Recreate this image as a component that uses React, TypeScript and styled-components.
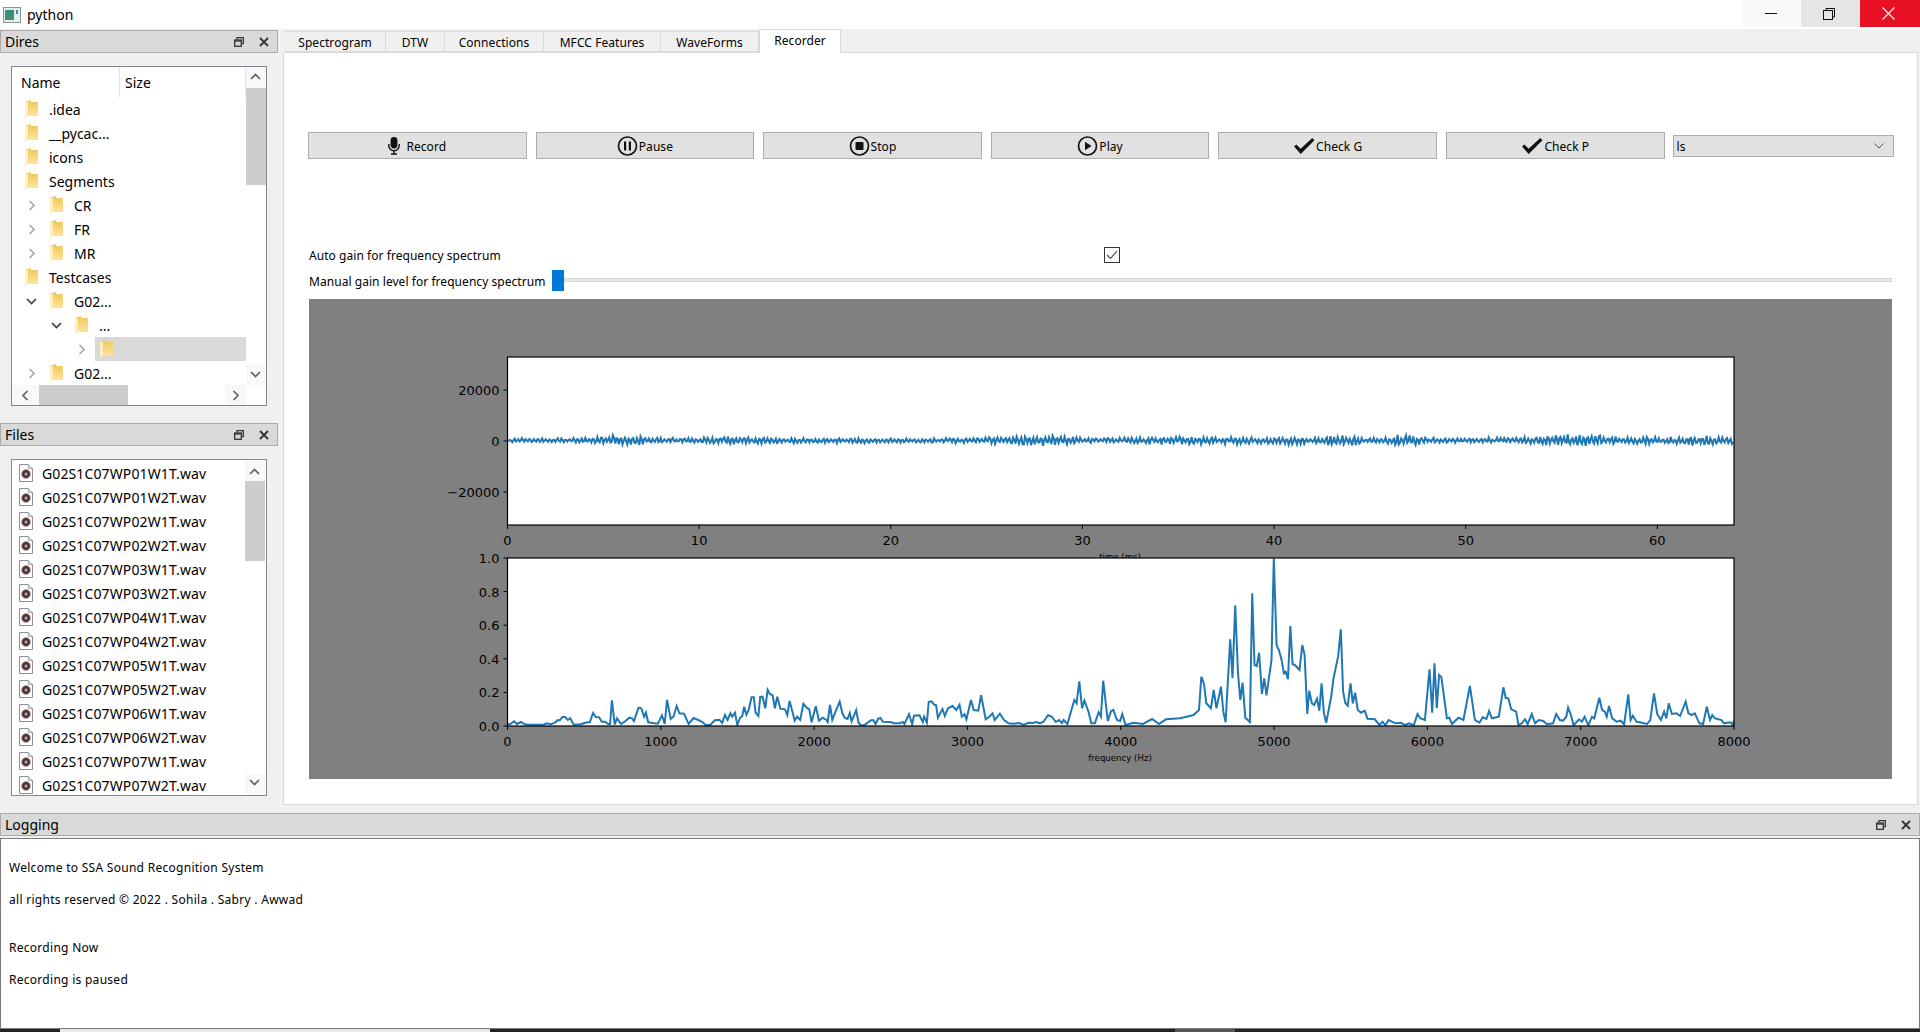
import React from 'react';
import styled, { createGlobalStyle } from 'styled-components';

const GlobalStyle = createGlobalStyle`
  html, body { margin: 0; padding: 0; background: #f0f0f0; }
  body { font-family: "Noto Sans", "Open Sans", sans-serif; color: #000; }
  * { box-sizing: border-box; }
`;

const Window = styled.div`
  width: 1920px;
  height: 1032px;
  overflow: hidden;
  display: flex;
  flex-direction: column;
  background: #f0f0f0;
`;

/* window chrome */
const TitleBar = styled.div`
  height: 29px;
  background: #fff;
  display: flex;
  align-items: flex-start;
`;
const AppIconBox = styled.div`
  width: 27px;
  height: 29px;
  padding: 6px 0 0 3px;
`;
const AppTitle = styled.div`
  flex: 1;
  font-size: 14px;
  line-height: 30px;
`;
const WinButton = styled.div<{ $bg: string; $w: number; $inset: number }>`
  width: ${(p) => p.$w}px;
  height: 27px;
  padding-right: ${(p) => p.$inset}px;
  background: ${(p) => p.$bg};
  display: flex;
  align-items: center;
  justify-content: center;
`;

/* main area */
const MainRow = styled.div`
  height: 784px;
  display: flex;
`;
const LeftColumn = styled.div`
  width: 278px;
  margin: 1px 5px 0 0;
  display: flex;
  flex-direction: column;
`;
const DockTitle = styled.div`
  height: 23px;
  flex: none;
  background: #d9d9d9;
  border: 1px solid #ababab;
  padding: 0 4px;
  display: flex;
  align-items: center;
  font-size: 14px;
`;
const DockName = styled.span`
  flex: 1;
`;
const DockButtons = styled.span`
  display: flex;
  gap: 15px;
  align-items: center;
  margin-right: 4px;
`;

const TreeBox = styled.div`
  width: 256px;
  height: 340px;
  margin: 13px 0 17px 11px;
  border: 1px solid #828790;
  background: #fff;
  display: grid;
  grid-template-columns: 234px 20px;
  grid-template-rows: 318px 20px;
`;
const TreePane = styled.div`
  overflow: hidden;
`;
const HeaderRow = styled.div`
  height: 30px;
  display: flex;
  font-size: 14px;
  line-height: 32px;
`;
const HeaderCell = styled.div<{ $w: number; $pad: number }>`
  width: ${(p) => p.$w}px;
  padding-left: ${(p) => p.$pad}px;
  border-right: 1px solid #e5e5e5;
  height: 30px;
`;
const TreeRow = styled.div<{ $depth: number }>`
  height: 24px;
  padding-left: ${(p) => 13 + p.$depth * 25}px;
  display: flex;
  align-items: center;
  font-size: 14px;
  white-space: nowrap;
`;
const TreeArrow = styled.span`
  width: 25px;
  margin-left: -25px;
  padding-left: 1px;
  display: flex;
  align-items: center;
`;
const FolderSlot = styled.span<{ $selected?: boolean }>`
  display: flex;
  align-items: center;
  height: 24px;
  width: ${(p) => (p.$selected ? '151px' : '24px')};
  margin-left: ${(p) => (p.$selected ? '-5px' : '0')};
  padding-left: ${(p) => (p.$selected ? '5px' : '0')};
  background: ${(p) => (p.$selected ? '#d9d9d9' : 'transparent')};
`;

const FileBox = styled.div`
  width: 256px;
  height: 337px;
  margin: 13px 0 0 11px;
  border: 1px solid #828790;
  background: #fff;
  display: flex;
`;
const FileList = styled.div`
  width: 233px;
  overflow: hidden;
  padding-top: 1px;
`;
const FileRow = styled.div`
  height: 24px;
  display: flex;
  align-items: center;
  padding-left: 7px;
  gap: 9px;
  font-size: 14px;
  letter-spacing: 0.12px;
  white-space: nowrap;
`;

const VScroll = styled.div<{ $h: number }>`
  width: 20px;
  height: ${(p) => p.$h}px;
  background: #fff;
  display: flex;
  flex-direction: column;
  align-items: stretch;
`;
const VArrow = styled.div<{ $top?: number; $bottom?: number }>`
  height: 21px;
  flex: none;
  padding: ${(p) => p.$top || 0}px 1px ${(p) => p.$bottom || 0}px 0;
  background: #f8f8f8;
  display: flex;
  align-items: center;
  justify-content: center;
`;
const VThumb = styled.div<{ $h: number }>`
  height: ${(p) => p.$h}px;
  flex: none;
  background: #cdcdcd;
`;
const ScrollGap = styled.div`
  flex: 1;
`;
const HScroll = styled.div`
  height: 20px;
  grid-column: 1;
  display: flex;
  background: #fff;
`;
const HArrow = styled.div<{ $w: number }>`
  width: ${(p) => p.$w}px;
  flex: none;
  background: #f8f8f8;
  display: flex;
  align-items: center;
  justify-content: center;
`;
const HThumb = styled.div`
  width: 89px;
  background: #cdcdcd;
`;

/* tabs */
const RightColumn = styled.div`
  width: 1635px;
  display: flex;
  flex-direction: column;
`;
const TabStrip = styled.div`
  height: 23px;
  flex: none;
  padding-left: 2px;
  display: flex;
  align-items: flex-end;
`;
const Tab = styled.div<{ $w: number; $active?: boolean }>`
  width: ${(p) => p.$w}px;
  height: ${(p) => (p.$active ? 24 : 21)}px;
  margin-bottom: ${(p) => (p.$active ? -1 : 0)}px;
  position: relative;
  z-index: ${(p) => (p.$active ? 1 : 0)};
  background: ${(p) => (p.$active ? '#fff' : '#f0f0f0')};
  border: 1px solid #d9d9d9;
  border-bottom: ${(p) => (p.$active ? 'none' : '1px solid #d9d9d9')};
  border-left: ${(p) => (p.$active ? '1px solid #d9d9d9' : 'none')};
  font-size: 12px;
  letter-spacing: 0.06px;
  text-align: center;
  line-height: 22.5px;
`;
const TabPane = styled.div`
  height: 753px;
  background: #fff;
  border: 1px solid #d9d9d9;
  padding: 79px 0 0 24px;
  letter-spacing: 0.05px;
`;
const ButtonRow = styled.div`
  display: flex;
  align-items: center;
  gap: 9px;
`;
const ToolButton = styled.div`
  width: 218.6px;
  height: 27px;
  padding-top: 1px;
  background: #e1e1e1;
  border: 1px solid #adadad;
  display: flex;
  align-items: center;
  justify-content: center;
  font-size: 12px;
`;
const ButtonIcon = styled.span<{ $gap: number }>`
  display: flex;
  margin: -1px ${(p) => p.$gap}px 0 0;
`;
const Combo = styled.div`
  width: 221px;
  height: 22px;
  margin-left: -1px;
  background: #e1e1e1;
  border: 1px solid #adadad;
  padding: 1px 9px 0 3px;
  display: flex;
  align-items: center;
  justify-content: space-between;
  font-size: 12px;
`;
const GainRow = styled.div`
  margin: 86px 0 0 1px;
  height: 20px;
  display: grid;
  grid-template-columns: 795px 16px;
  align-items: center;
  font-size: 12px;
`;
const CheckBox = styled.div`
  width: 16px;
  height: 16px;
  border: 1px solid #333;
  background: #fff;
  display: flex;
  align-items: center;
  justify-content: center;
`;
const SliderRow = styled.div`
  margin: 5px 0 0 1px;
  height: 21px;
  width: 1583px;
  display: flex;
  align-items: center;
  font-size: 12px;
`;
const SliderLabel = styled.span`
  width: 243px;
  flex: none;
  padding-top: 2px;
`;
const SliderHandle = styled.div`
  width: 12px;
  height: 21px;
  flex: none;
  background: #0078d7;
`;
const SliderTrack = styled.div`
  flex: 1;
  height: 4px;
  margin-top: -1px;
  background: #e7eaea;
  border: 1px solid #d6d6d6;
`;
const ChartCanvas = styled.div`
  width: 1583px;
  height: 480px;
  margin: 8px 0 0 1px;
  background: #808080;
`;
const ChartSvg = styled.svg`
  display: block;
  font-family: "DejaVu Sans", sans-serif;
  letter-spacing: 0;
`;

/* logging dock */
const LogBox = styled.div`
  height: 191px;
  margin-top: 2px;
  background: #fff;
  border: 1px solid #7a7a7a;
  padding: 13px 0 0 8px;
  font-size: 12px;
  letter-spacing: 0.28px;
`;
const LogLine = styled.div<{ $gap?: number }>`
  line-height: 32px;
  margin-top: ${(p) => p.$gap || 0}px;
`;
const BottomStrip = styled.div`
  height: 3px;
  display: flex;
`;
const StripPart = styled.div<{ $w: number; $bg: string }>`
  width: ${(p) => p.$w}px;
  background: ${(p) => p.$bg};
`;

/* icons */
const AppIcon = () => (
  <svg width="18" height="16" viewBox="0 0 18 16">
    <defs>
      <linearGradient id="appg" x1="0" y1="0" x2="0" y2="1">
        <stop offset="0" stopColor="#2f8f8a" />
        <stop offset="1" stopColor="#4f8f5a" />
      </linearGradient>
    </defs>
    <rect x="0.5" y="0.5" width="17" height="15" fill="#e8ecef" stroke="#8b9298" />
    <rect x="2" y="3" width="9" height="10" fill="url(#appg)" />
    <rect x="13" y="3" width="2" height="4" fill="#3f8fb0" />
  </svg>
);
const FloatIcon = () => (
  <svg width="10" height="10" viewBox="0 0 10 10" fill="none" stroke="#333" strokeWidth="1.3">
    <path d="M3 2.5V.7h6.3v6H7.5" />
    <rect x=".7" y="3" width="6.6" height="6.3" />
    <path d="M.7 4h6.6" />
  </svg>
);
const CloseIcon = () => (
  <svg width="10" height="10" viewBox="0 0 10 10" stroke="#333" strokeWidth="1.8">
    <path d="M1 1l8 8M9 1L1 9" />
  </svg>
);
const DockControls = () => (
  <DockButtons>
    <FloatIcon />
    <CloseIcon />
  </DockButtons>
);
const Chevron = ({ dir, color = '#606060' }: { dir: 'up' | 'down' | 'left' | 'right'; color?: string }) => {
  const d = {
    up: 'M1 7l4.5-4.5L10 7',
    down: 'M1 3l4.5 4.5L10 3',
    left: 'M7.5 1L3 5.5 7.5 10',
    right: 'M3.5 1L8 5.5 3.5 10',
  }[dir];
  return (
    <svg width="11" height="11" viewBox="0 0 11 11" fill="none" stroke={color} strokeWidth="1.7">
      <path d={d} />
    </svg>
  );
};
const Folder = () => (
  <svg width="13" height="18" viewBox="0 0 13 18">
    <defs>
      <linearGradient id="fold" x1="0" y1="0" x2="0" y2="1">
        <stop offset="0" stopColor="#eec65c" />
        <stop offset="1" stopColor="#ffe7a3" />
      </linearGradient>
    </defs>
    <path d="M0 1.5L6 0v2h7v14H3l-3 2z" fill="url(#fold)" />
    <path d="M0 1.5L3 2v14l-3 2z" fill="#ffeebb" />
  </svg>
);
const WavIcon = () => (
  <svg width="14" height="18" viewBox="0 0 14 18">
    <path d="M.5.5h9l4 4v13H.5z" fill="#fdfdfd" stroke="#8e8e96" />
    <path d="M9.5.5v4h4" fill="#e8e8ee" stroke="#a8a8b0" />
    <circle cx="7" cy="10" r="4.2" fill="#4a3438" />
    <circle cx="7" cy="10" r="4.4" fill="none" stroke="#a67a86" strokeWidth=".7" />
    <circle cx="7" cy="10" r="1.5" fill="#c9a99a" />
  </svg>
);
const MicIcon = () => (
  <svg width="12" height="18" viewBox="0 0 12 18">
    <rect x="2.6" y="0" width="6.8" height="11.5" rx="3.4" fill="#111" />
    <path d="M.8 7v1.6a5.2 5.2 0 0 0 10.4 0V7M6 14v2.6M3 17h6" fill="none" stroke="#111" strokeWidth="1.4" />
  </svg>
);
const RingIcon = ({ children }: { children: React.ReactNode }) => (
  <svg width="21" height="20" viewBox="0 0 21 20">
    <circle cx="10.5" cy="10" r="9" fill="none" stroke="#111" strokeWidth="1.7" />
    {children}
  </svg>
);
const CheckIcon = () => (
  <svg width="22" height="16" viewBox="0 0 20 15" preserveAspectRatio="none">
    <path d="M1 8l2-2 4 4L17.5 0 19.5 2 7 15z" fill="#111" />
  </svg>
);

/* spectrum trace, read off the plot in two runs */
const spectrumA = [
  190,553,197,552,205,544,211,552,220,546,228,553,240,554,270,554,275,550,285,553,295,547,300,540,305,541,310,531,316,531,322,540,327,535,335,554,
  350,553,360,548,370,546,377,519,383,531,390,532,396,545,403,545,410,552,414,552,418,481,424,553,429,535,438,552,447,544,456,533,462,535,466,543,
  476,503,482,505,488,530,492,518,497,547,510,550,518,551,527,526,533,552,538,480,546,537,552,530,559,498,565,520,575,521,585,552,596,534,606,540,
  615,546,622,555,632,555,642,541,652,539,658,549,664,525,670,540,676,520,680,530,686,518,691,555,697,534,702,528,706,500,711,524,716,510,722,472,
  727,472,731,518,737,528,741,471,746,470,752,505,757,449,762,462,768,466,773,505,778,470,785,506,795,508,800,525,805,483,812,520,816,542,821,530,
  828,540,835,491,842,503,848,508,853,547,862,499,869,542,877,533,885,540,888,546,893,495,898,540,905,515,914,485,920,520,925,533,931,537,936,519,
  940,544,950,510,955,548,962,558,970,553,982,541,988,541,992,552,998,536,1003,534,1008,545,1025,546,1032,550,1045,550,1052,546,1055,552,1065,523,
  1072,553,1076,527,1088,526,1095,546,1098,530,1104,548,1108,486,1114,484,1120,494,1124,495,1128,533,1138,507,1143,528,1150,505,1160,498,1168,510,
  1175,494,1180,530,1186,523,1190,538,1200,480,1206,510,1216,512,1222,466,1232,538,1240,530,1247,520,1252,540,1263,521,1272,540,1282,550,1292,551,
  1305,549,1315,555,1325,548,1335,549,1342,546,1350,550,1358,545,1368,525,1376,530,1385,546,1392,540,1398,549,1402,540,1410,552,1425,480,1430,490,
  1436,424,1442,505,1447,482,1456,515,1462,550,1470,550,1478,517,1483,530,1488,422,1498,543,1505,514,1510,510,1518,540,1525,543,
];
const spectrumB = [
  5,522,12,555,30,548,50,552,70,537,85,552,100,538,130,535,145,530,160,525,172,510,177,410,183,432,188,490,198,505,204,450,210,505,220,440,225,515,
  230,547,240,298,245,415,251,196,257,400,262,480,267,428,273,533,283,546,288,160,293,375,298,378,303,338,309,462,314,415,319,466,330,360,335,55,
  341,316,346,330,352,360,357,400,361,395,366,418,371,258,376,373,381,375,391,390,397,315,402,345,408,522,412,452,418,490,423,495,429,476,434,512,
  439,430,444,520,449,548,460,470,465,415,475,350,481,268,486,455,491,490,496,497,502,430,507,490,512,458,518,510,525,518,533,512,539,536,555,538,
  565,555,572,545,578,556,585,540,600,550,612,548,620,555,630,550,640,556,648,522,654,535,664,540,674,388,680,518,685,370,690,505,695,405,700,412,
  712,535,717,533,723,552,737,533,748,540,762,438,773,540,783,548,790,532,798,537,804,513,810,535,825,530,835,442,840,474,846,475,852,508,863,515,
  868,556,875,550,882,538,888,552,897,522,904,550,912,540,922,543,930,553,943,550,950,522,958,540,965,542,972,530,976,503,982,525,988,556,1000,538,
  1006,545,1012,530,1020,556,1028,530,1033,535,1044,473,1050,510,1056,515,1060,530,1065,498,1072,535,1082,545,1090,542,1098,553,1107,463,1112,540,
  1117,527,1125,545,1132,547,1148,552,1155,540,1163,460,1170,522,1178,540,1185,515,1190,535,1195,490,1202,522,1212,520,1220,528,1232,485,1238,520,
  1245,525,1252,520,1262,550,1270,552,1278,500,1285,540,1290,525,1296,535,1310,540,1315,550,1330,547,1335,555,1338,540,
];

function tracePoints(run: number[], originX: number) {
  const out: string[] = [];
  for (let i = 0; i < run.length; i += 2) {
    out.push(`${(originX + run[i] / 2.178).toFixed(1)},${(540 + run[i + 1] / 3).toFixed(1)}`);
  }
  return out;
}
const spectrumPoints = [...tracePoints(spectrumA, 420), ...tracePoints(spectrumB, 1120)].join(' ');

/* waveform: low level noise with a few louder stretches */
const bursts = [
  [623, 3, 20], [740, 2, 25], [1038, 3.5, 30], [1270, 1.5, 50], [1170, 2.5, 20],
  [1340, 3.5, 12], [1405, 5, 12], [1575, 3.5, 40], [1700, 2.5, 25],
];
function buildWave() {
  let seed = 12345;
  const rnd = () => {
    seed = (seed * 16807) % 2147483647;
    return seed / 2147483647;
  };
  const pts: string[] = [];
  for (let i = 0; i < 1024; i++) {
    const x = 507.5 + i * 1.198;
    let env = 2.6;
    bursts.forEach(([c, a, w]) => {
      env += a * Math.exp(-((x - c) * (x - c)) / (2 * w * w));
    });
    const y = 440.5 - 0.3 * Math.sin(i / 60) + Math.sin(i * 1.9 + rnd()) * env * (0.35 + 0.65 * rnd());
    pts.push(`${x.toFixed(1)},${y.toFixed(1)}`);
  }
  return pts.join(' ');
}
const wavePoints = buildWave();

const PLOT_L = 507.5;
const PLOT_W = 1226.5;

const Axes = ({
  top,
  xTicks,
  yTicks,
}: {
  top: number;
  xTicks: { x: number; label: string }[];
  yTicks: { y: number; label: string }[];
}) => (
  <g fontSize="13" fill="#000">
    {xTicks.map((t) => (
      <g key={t.label}>
        <line x1={t.x} x2={t.x} y1={top + 168} y2={top + 172} stroke="#000" strokeWidth="1" />
        <text x={t.x} y={top + 188} textAnchor="middle">{t.label}</text>
      </g>
    ))}
    {yTicks.map((t) => (
      <g key={t.label}>
        <line x1={PLOT_L - 4} x2={PLOT_L} y1={t.y} y2={t.y} stroke="#000" strokeWidth="1" />
        <text x={PLOT_L - 8} y={t.y + 5} textAnchor="end">{t.label}</text>
      </g>
    ))}
    <rect x={PLOT_L} y={top} width={PLOT_W} height={168} fill="none" stroke="#000" strokeWidth="1.2" />
  </g>
);

const Chart = () => {
  const timeTicks = [0, 10, 20, 30, 40, 50, 60].map((v) => ({ x: PLOT_L + v * 19.164, label: String(v) }));
  const freqTicks = [0, 1000, 2000, 3000, 4000, 5000, 6000, 7000, 8000].map((v) => ({
    x: PLOT_L + (v / 8000) * PLOT_W,
    label: String(v),
  }));
  const ampTicks = [
    { y: 390, label: '20000' },
    { y: 441, label: '0' },
    { y: 492, label: '\u221220000' },
  ];
  const levelTicks = [0, 0.2, 0.4, 0.6, 0.8, 1].map((v) => ({ y: 726 - v * 168, label: v.toFixed(1) }));
  return (
    <ChartCanvas>
      <ChartSvg width="1583" height="480" viewBox="309 299 1583 480">
        <defs>
          <clipPath id="waveClip">
            <rect x={PLOT_L} y={357} width={PLOT_W} height={168} />
          </clipPath>
          <clipPath id="specClip">
            <rect x={PLOT_L} y={558} width={PLOT_W} height={168} />
          </clipPath>
        </defs>
        <rect x={PLOT_L} y={357} width={PLOT_W} height={168} fill="#fff" />
        <polyline points={wavePoints} fill="none" stroke="#1f77b4" strokeWidth="2" clipPath="url(#waveClip)" />
        <Axes top={357} xTicks={timeTicks} yTicks={ampTicks} />
        <text x="1120" y="560" fontSize="8.6" textAnchor="middle">time (ms)</text>
        <rect x={PLOT_L} y={558} width={PLOT_W} height={168} fill="#fff" />
        <polyline points={spectrumPoints} fill="none" stroke="#1f77b4" strokeWidth="2" clipPath="url(#specClip)" />
        <Axes top={558} xTicks={freqTicks} yTicks={levelTicks} />
        <text x="1120" y="761" fontSize="8.6" textAnchor="middle">frequency (Hz)</text>
      </ChartSvg>
    </ChartCanvas>
  );
};

const treeRows = [
  { depth: 0, name: '.idea' },
  { depth: 0, name: '__pycac...' },
  { depth: 0, name: 'icons' },
  { depth: 0, name: 'Segments' },
  { depth: 1, name: 'CR', arrow: 'right' },
  { depth: 1, name: 'FR', arrow: 'right' },
  { depth: 1, name: 'MR', arrow: 'right' },
  { depth: 0, name: 'Testcases' },
  { depth: 1, name: 'G02...', arrow: 'down' },
  { depth: 2, name: '...', arrow: 'down' },
  { depth: 3, name: '', arrow: 'right', selected: true },
  { depth: 1, name: 'G02...', arrow: 'right' },
];

const fileNames: string[] = [];
for (let p = 1; p <= 7; p++) {
  fileNames.push(`G02S1C07WP0${p}W1T.wav`, `G02S1C07WP0${p}W2T.wav`);
}

const tabs = [
  { name: 'Spectrogram', w: 101 },
  { name: 'DTW', w: 59 },
  { name: 'Connections', w: 99 },
  { name: 'MFCC Features', w: 117 },
  { name: 'WaveForms', w: 98 },
  { name: 'Recorder', w: 82, active: true },
];

export default function App() {
  return (
    <Window>
      <GlobalStyle />
      <TitleBar>
        <AppIconBox>
          <AppIcon />
        </AppIconBox>
        <AppTitle>python</AppTitle>
        <WinButton $bg="#fafafa" $w={59} $inset={2}>
          <svg width="12" height="2"><rect width="12" height="1" fill="#111" /></svg>
        </WinButton>
        <WinButton $bg="#e5e5e5" $w={59} $inset={3}>
          <svg width="12" height="12" viewBox="0 0 12 12" fill="none" stroke="#111">
            <path d="M3 2.5V.5h8.5V9H9.5" />
            <rect x=".5" y="2.5" width="9" height="9" />
          </svg>
        </WinButton>
        <WinButton $bg="#e81123" $w={60} $inset={4}>
          <svg width="13" height="13" viewBox="0 0 13 13" stroke="#fff" strokeWidth="1.1">
            <path d="M.5.5l12 12M12.5.5l-12 12" />
          </svg>
        </WinButton>
      </TitleBar>

      <MainRow>
        <LeftColumn>
          <DockTitle>
            <DockName>Dires</DockName>
            <DockControls />
          </DockTitle>
          <TreeBox>
            <TreePane>
              <HeaderRow>
                <HeaderCell $w={108} $pad={9}>Name</HeaderCell>
                <HeaderCell $w={126} $pad={5}>Size</HeaderCell>
              </HeaderRow>
              {treeRows.map((row, i) => (
                <TreeRow key={i} $depth={row.depth}>
                  {row.arrow && (
                    <TreeArrow>
                      <Chevron dir={row.arrow as 'right' | 'down'} color={row.arrow === 'down' ? '#404040' : '#a6a6a6'} />
                    </TreeArrow>
                  )}
                  <FolderSlot $selected={row.selected}>
                    <Folder />
                  </FolderSlot>
                  {row.name}
                </TreeRow>
              ))}
            </TreePane>
            <VScroll $h={318}>
              <VArrow><Chevron dir="up" /></VArrow>
              <VThumb $h={97} />
              <ScrollGap />
              <VArrow $bottom={1}><Chevron dir="down" /></VArrow>
            </VScroll>
            <HScroll>
              <HArrow $w={27}><Chevron dir="left" /></HArrow>
              <HThumb />
              <ScrollGap />
              <HArrow $w={21}><Chevron dir="right" /></HArrow>
            </HScroll>
          </TreeBox>

          <DockTitle>
            <DockName>Files</DockName>
            <DockControls />
          </DockTitle>
          <FileBox>
            <FileList>
              {fileNames.map((f) => (
                <FileRow key={f}>
                  <WavIcon />
                  {f}
                </FileRow>
              ))}
            </FileList>
            <VScroll $h={335}>
              <VArrow $top={3}><Chevron dir="up" /></VArrow>
              <VThumb $h={80} />
              <ScrollGap />
              <VArrow $bottom={4}><Chevron dir="down" /></VArrow>
            </VScroll>
          </FileBox>
        </LeftColumn>

        <RightColumn>
          <TabStrip>
            {tabs.map((t) => (
              <Tab key={t.name} $w={t.w} $active={t.active}>{t.name}</Tab>
            ))}
          </TabStrip>
          <TabPane>
            <ButtonRow>
              <ToolButton><ButtonIcon $gap={6}><MicIcon /></ButtonIcon>Record</ToolButton>
              <ToolButton>
                <ButtonIcon $gap={1}>
                  <RingIcon>
                    <rect x="7" y="5.5" width="2.2" height="9" fill="#111" />
                    <rect x="11.8" y="5.5" width="2.2" height="9" fill="#111" />
                  </RingIcon>
                </ButtonIcon>
                Pause
              </ToolButton>
              <ToolButton>
                <ButtonIcon $gap={1}>
                  <RingIcon><rect x="6.5" y="6" width="8" height="8" rx="1" fill="#111" /></RingIcon>
                </ButtonIcon>
                Stop
              </ToolButton>
              <ToolButton>
                <ButtonIcon $gap={1}>
                  <RingIcon><path d="M8 5.8v8.4L14.5 10z" fill="#111" /></RingIcon>
                </ButtonIcon>
                Play
              </ToolButton>
              <ToolButton><ButtonIcon $gap={1}><CheckIcon /></ButtonIcon>Check G</ToolButton>
              <ToolButton><ButtonIcon $gap={1}><CheckIcon /></ButtonIcon>Check P</ToolButton>
              <Combo>
                ls
                <svg width="10" height="6" viewBox="0 0 10 6" fill="none" stroke="#555">
                  <path d="M.5.5L5 5 9.5.5" />
                </svg>
              </Combo>
            </ButtonRow>
            <GainRow>
              <span>Auto gain for frequency spectrum</span>
              <CheckBox>
                <svg width="12" height="10" viewBox="0 0 12 10" fill="none" stroke="#444" strokeWidth="1.1">
                  <path d="M1 5l3.5 3.5L11 1" />
                </svg>
              </CheckBox>
            </GainRow>
            <SliderRow>
              <SliderLabel>Manual gain level for frequency spectrum</SliderLabel>
              <SliderHandle />
              <SliderTrack />
            </SliderRow>
            <Chart />
          </TabPane>
        </RightColumn>
      </MainRow>

      <DockTitle>
        <DockName>Logging</DockName>
        <DockControls />
      </DockTitle>
      <LogBox>
        <LogLine>Welcome to SSA Sound Recognition System</LogLine>
        <LogLine>all rights reserved © 2022 . Sohila . Sabry . Awwad</LogLine>
        <LogLine $gap={16}>Recording Now</LogLine>
        <LogLine>Recording is paused</LogLine>
      </LogBox>
      <BottomStrip>
        <StripPart $w={60} $bg="#222" />
        <StripPart $w={430} $bg="#e8e8e8" />
        <StripPart $w={685} $bg="#222" />
        <StripPart $w={60} $bg="#555" />
        <StripPart $w={685} $bg="#222" />
      </BottomStrip>
    </Window>
  );
}
